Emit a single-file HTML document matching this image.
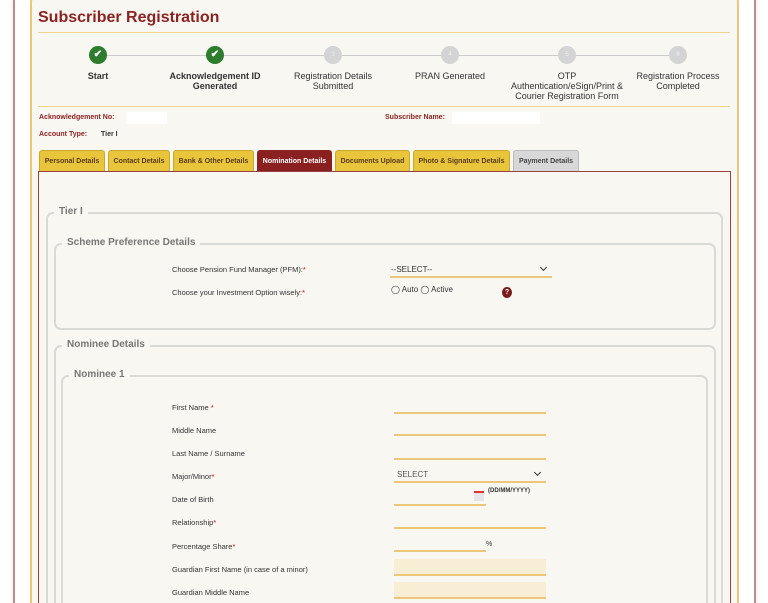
<!DOCTYPE html>
<html><head><meta charset="utf-8"><style>
*{box-sizing:border-box;margin:0;padding:0}
html,body{width:768px;height:603px;overflow:hidden}
body{background:#fff;font-family:"Liberation Sans",Arial,sans-serif;position:relative}
.a{position:absolute}
.outer{left:13px;top:-2px;width:743px;height:620px;border-left:2px solid #c48a88;border-right:2px solid #c48a88;box-shadow:0 0 6px rgba(0,0,0,.1)}
.card{left:30px;top:-6px;width:709px;height:620px;background:#f9f7f2;border:2px solid #ecc77a;border-radius:8px}
h1{position:absolute;left:38px;top:9px;font-size:16px;color:#8b2323;font-weight:bold}
.hl{height:1px;background:#f0d58f;left:38px;width:692px}
.line{top:55px;height:1px;background:#ccc;left:98px;width:580px}
.c{width:18px;height:18px;border-radius:50%;background:#d4d4d4;color:#eee;font-size:6px;text-align:center;line-height:18px;top:46px}
.c.g{background:#2e7d2e;color:#fff;font-size:10px;font-weight:bold}
.lb{font-size:9px;color:#333;text-align:center;top:71px;line-height:10px;width:130px}
.sm{font-size:7px;font-weight:bold;color:#8b2323}
.wb{background:#fff;height:12px}
.tab{top:150px;height:22px;background:#e9c53c;border:1px solid #c9a830;border-bottom:none;border-radius:3px 3px 0 0;font-size:7px;font-weight:bold;color:#5a3a1a;text-align:center;line-height:21px}
.panel{left:38px;top:171px;width:693px;height:440px;border:1px solid #9b4040;background:#f9f7f2}
.fs{border:2px solid #d9d9d6;border-radius:7px}
.lg{font-size:10px;font-weight:bold;color:#777;background:#f9f7f2;padding:0 5px}
.fl{font-size:7.5px;color:#333;left:172px}
.r{color:#d00}
.u{left:394px;width:152px;height:2px;background:#ecc77a}
.gf{left:394px;width:152px;height:17px;background:#f8eed6;border-bottom:2px solid #ecc77a}
.chev{width:5px;height:5px;border-right:1.5px solid #333;border-bottom:1.5px solid #333;transform:rotate(45deg)}
</style></head><body>
<div class="a outer"></div>
<div class="a card"></div>
<h1>Subscriber Registration</h1>
<div class="a hl" style="top:32px"></div>
<div class="a line"></div>
<div class="a c g" style="left:89px">✔</div>
<div class="a c g" style="left:206px">✔</div>
<div class="a c" style="left:324px">3</div>
<div class="a c" style="left:441px">4</div>
<div class="a c" style="left:558px">5</div>
<div class="a c" style="left:669px">6</div>
<div class="a lb" style="left:33px;font-weight:bold">Start</div>
<div class="a lb" style="left:150px;font-weight:bold">Acknowledgement ID<br>Generated</div>
<div class="a lb" style="left:268px">Registration Details<br>Submitted</div>
<div class="a lb" style="left:385px">PRAN Generated</div>
<div class="a lb" style="left:502px">OTP<br>Authentication/eSign/Print &amp;<br>Courier Registration Form</div>
<div class="a lb" style="left:613px">Registration Process<br>Completed</div>
<div class="a hl" style="top:106px"></div>
<div class="a sm" style="left:39px;top:114px">Acknowledgement No:</div>
<div class="a wb" style="left:126px;top:112px;width:41px"></div>
<div class="a sm" style="left:385px;top:114px">Subscriber Name:</div>
<div class="a wb" style="left:452px;top:112px;width:88px"></div>
<div class="a sm" style="left:39px;top:131px">Account Type:</div>
<div class="a sm" style="left:101px;top:131px;color:#333">Tier I</div>
<div class="a tab" style="left:39px;width:66px">Personal Details</div>
<div class="a tab" style="left:108px;width:62px">Contact Details</div>
<div class="a tab" style="left:173px;width:81px">Bank &amp; Other Details</div>
<div class="a tab" style="left:257px;width:75px;background:#8b2020;border-color:#8b2020;color:#fff">Nomination Details</div>
<div class="a tab" style="left:335px;width:75px">Documents Upload</div>
<div class="a tab" style="left:413px;width:97px">Photo &amp; Signature Details</div>
<div class="a tab" style="left:513px;width:66px;background:#d8d8d8;border-color:#bbb;color:#444">Payment Details</div>
<div class="a panel"></div>
<div class="a fs" style="left:46px;top:212px;width:677px;height:420px"></div>
<div class="a lg" style="left:54px;top:206px">Tier I</div>
<div class="a fs" style="left:54px;top:243px;width:662px;height:87px"></div>
<div class="a lg" style="left:62px;top:237px">Scheme Preference Details</div>
<div class="a fl" style="top:265px">Choose Pension Fund Manager (PFM):<span class="r">*</span></div>
<div class="a" style="left:391px;top:265px;font-size:8px;color:#333">--SELECT--</div>
<div class="a chev" style="left:541px;top:265px"></div>
<div class="a u" style="left:390px;width:162px;top:276px"></div>
<div class="a fl" style="top:288px">Choose your Investment Option wisely:<span class="r">*</span></div>
<div class="a" style="left:391px;top:285px;font-size:8px;color:#333">◯ Auto ◯ Active</div>
<div class="a" style="left:502px;top:287px;width:10px;height:11px;border-radius:50%;background:#7a1a1a;color:#fff;font-size:7px;text-align:center;line-height:11px;font-weight:bold">?</div>
<div class="a fs" style="left:54px;top:345px;width:662px;height:280px"></div>
<div class="a lg" style="left:62px;top:339px">Nominee Details</div>
<div class="a fs" style="left:61px;top:375px;width:647px;height:250px"></div>
<div class="a lg" style="left:69px;top:369px">Nominee 1</div>
<div class="a fl" style="top:403px">First Name <span class="r">*</span></div><div class="a u" style="top:412px"></div>
<div class="a fl" style="top:426px">Middle Name</div><div class="a u" style="top:434px"></div>
<div class="a fl" style="top:449px">Last Name / Surname</div><div class="a u" style="top:458px"></div>
<div class="a fl" style="top:472px">Major/Minor<span class="r">*</span></div>
<div class="a" style="left:397px;top:470px;font-size:8px;color:#555">SELECT</div>
<div class="a chev" style="left:535px;top:470px"></div>
<div class="a u" style="top:481px"></div>
<div class="a fl" style="top:495px">Date of Birth</div><div class="a u" style="top:504px;width:92px"></div>
<div class="a" style="left:474px;top:491px;width:10px;height:10px;background:#e5e5e5;border-top:2px solid #d33"></div>
<div class="a" style="left:488px;top:488px;font-size:6px;font-weight:bold;color:#333">(DD/MM/YYYY)</div>
<div class="a fl" style="top:518px">Relationship<span class="r">*</span></div><div class="a u" style="top:527px"></div>
<div class="a fl" style="top:542px">Percentage Share<span class="r">*</span></div><div class="a u" style="top:550px;width:92px"></div>
<div class="a" style="left:486px;top:541px;font-size:7px;color:#333">%</div>
<div class="a fl" style="top:565px">Guardian First Name (in case of a minor)</div><div class="a gf" style="top:559px"></div>
<div class="a fl" style="top:588px">Guardian Middle Name</div><div class="a gf" style="top:582px"></div>
</body></html>
